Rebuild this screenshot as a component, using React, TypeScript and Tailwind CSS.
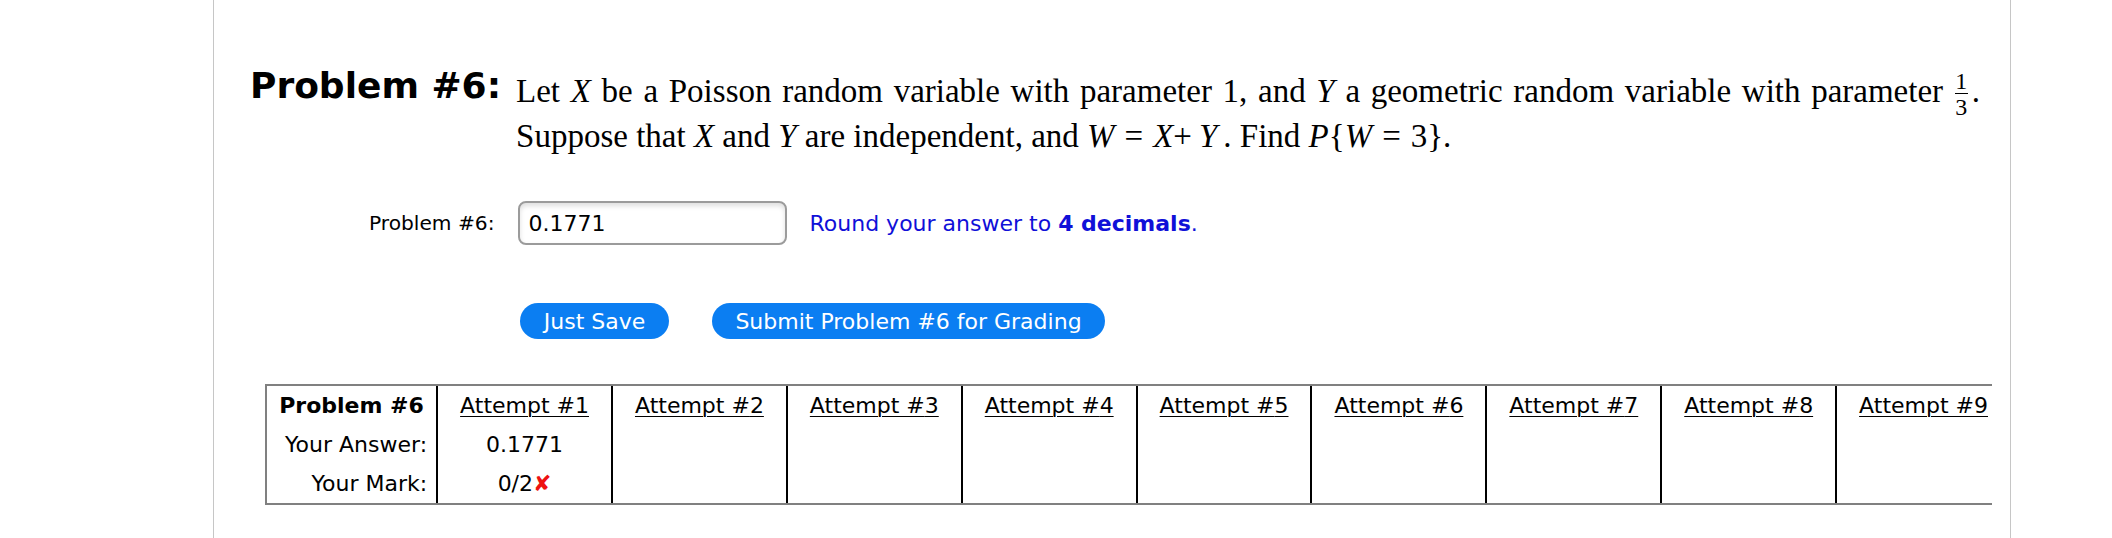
import React from 'react';

const attempts = [1, 2, 3, 4, 5, 6, 7, 8, 9];

function Frac({ num, den }: { num: string; den: string }) {
  return (
    <span className="inline-flex flex-col items-center align-[13px] text-[24px] leading-[22px] mx-[1px] my-[-14px]">
      <span className="px-[0.5px] border-b border-black pb-[1px]">{num}</span>
      <span className="px-[0.5px] pt-[2px]">{den}</span>
    </span>
  );
}

function M({ children }: { children: React.ReactNode }) {
  return <i className="italic">{children}</i>;
}

export default function App() {
  return (
    <div className="h-[538px] bg-white font-['DejaVu_Sans',Verdana,sans-serif] text-black overflow-hidden">
      <div className="ml-[213px] w-[1798px] h-full border-x border-[#c6c6c6]">
        {/* problem statement */}
        <div className="flex items-start pt-[69px] pl-[36px] pr-[30px]">
          <h2 className="text-[36px] font-bold leading-[36px] mt-[-1px] whitespace-nowrap">Problem #6:</h2>
          <div className="flex-1 ml-[15px] font-['Liberation_Serif','Times_New_Roman',serif] text-[33px] leading-[45px]">
            <div className="text-justify [text-align-last:justify]">
              Let <M>X</M> be a Poisson random variable with parameter 1, and <M>Y</M> a geometric random
              variable with parameter <Frac num="1" den="3" />
              <span className="ml-[3px]">.</span>
            </div>
            <div>
              Suppose that <M>X</M> and <M>Y</M> are independent, and <M>W</M>
              <span className="mx-[10px]">=</span>
              <M>X</M>
              <span className="mr-[7px]">+</span>
              <M>Y</M>
              <span className="ml-[6px]">.</span> Find <M>P</M>{'{'}<M>W</M>
              <span className="mx-[10px]">=</span>3{'}'}.
            </div>
          </div>
        </div>

        {/* answer row */}
        <div className="flex items-center mt-[42px] pl-[155px]">
          <label className="text-[20.2px] whitespace-nowrap">Problem #6:</label>
          <input
            readOnly
            value="0.1771"
            className="ml-[23px] w-[269px] h-[44px] border-2 border-[#9b9b9b] rounded-[8px] px-[9px] text-[22px] shadow-[inset_0_3px_5px_rgba(0,0,0,0.13)] outline-none"
          />
          <span className="ml-[23px] text-[22px] text-[#1010d8]">
            Round your answer to <b>4 decimals</b>.
          </span>
        </div>

        {/* buttons */}
        <div className="flex items-center gap-[43px] mt-[58px] pl-[306px]">
          <button className="h-[36px] w-[149px] rounded-full bg-[#0b7ef2] text-white text-[22px]">Just Save</button>
          <button className="h-[36px] w-[393px] rounded-full bg-[#0b7ef2] text-white text-[22px]">
            Submit Problem #6 for Grading
          </button>
        </div>

        {/* attempts table */}
        <div className="mt-[45px] ml-[51px] w-[1727px] overflow-hidden">
          <table className="table-fixed border-separate border-spacing-0 border-l-2 border-y-2 border-[#808080] text-[22px] w-[1745px]">
            <tbody>
              <tr className="h-[39px]">
                <th className="w-[169px] font-bold text-center">Problem #6</th>
                {attempts.map((n) => (
                  <td key={n} className="w-[174.75px] border-l-2 border-black text-center">
                    <span className="underline underline-offset-[3px] decoration-1">Attempt #{n}</span>
                  </td>
                ))}
              </tr>
              <tr className="h-[39px]">
                <td className="text-right pr-[9px]">Your Answer:</td>
                <td className="border-l-2 border-black text-center">0.1771</td>
                {attempts.slice(1).map((n) => (
                  <td key={n} className="border-l-2 border-black"></td>
                ))}
              </tr>
              <tr className="h-[39px]">
                <td className="text-right pr-[9px]">Your Mark:</td>
                <td className="border-l-2 border-black text-center">
                  0/2<span className="text-[#ee1111] font-bold">✘</span>
                </td>
                {attempts.slice(1).map((n) => (
                  <td key={n} className="border-l-2 border-black"></td>
                ))}
              </tr>
            </tbody>
          </table>
        </div>
      </div>
    </div>
  );
}
